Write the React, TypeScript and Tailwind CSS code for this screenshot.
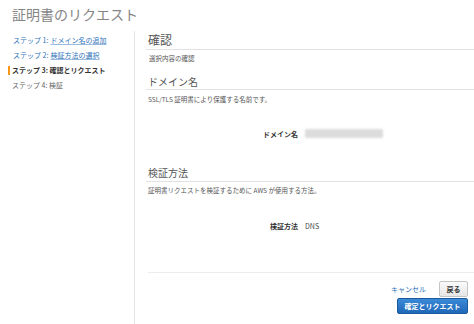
import React from 'react'

const font = { fontFamily: '"Noto Sans CJK JP", "Noto Sans", sans-serif' }

const steps = [
  { no: 1, label: 'ドメイン名の追加', state: 'done' },
  { no: 2, label: '検証方法の選択', state: 'done' },
  { no: 3, label: '確認とリクエスト', state: 'current' },
  { no: 4, label: '検証', state: 'todo' }
]

function StepItem({ no, label, state }: { no: number; label: string; state: string }) {
  if (state === 'current') {
    return (
      <div className="flex items-center h-[15px] pl-[8px]">
        <span className="w-[2px] h-[9px] bg-[#f7981d] mr-[2px]" />
        <span className="text-[7px] font-bold text-[#333]">
          ステップ {no}: {label}
        </span>
      </div>
    )
  }
  if (state === 'done') {
    return (
      <div className="flex items-center h-[15px] pl-[13px] text-[7px] text-[#2b70b8]">
        ステップ {no}: <span className="ml-[2px] underline decoration-[#9bbbe0]">{label}</span>
      </div>
    )
  }
  return (
    <div className="flex items-center h-[15px] pl-[12px] text-[7px] text-[#666]">
      ステップ {no}: {label}
    </div>
  )
}

function Row({ label, children }: { label: string; children: React.ReactNode }) {
  return (
    <div className="flex items-center text-[7px]">
      <div className="w-[152px] text-right font-bold text-[#333]">{label}</div>
      <div className="ml-[7px] text-[#444]">{children}</div>
    </div>
  )
}

export default function App() {
  return (
    <div className="w-[474px] h-[324px] bg-white overflow-hidden" style={font}>
      <h1 className="pl-[12px] pt-[2px] h-[31px] text-[14px] text-[#858585] leading-[24px]">
        証明書のリクエスト
      </h1>
      <div className="flex h-[293px]">
        <aside className="w-[135px] border-r border-[#e4e4e4] pt-[2px] shrink-0">
          <div className="flex flex-col">
            {steps.map((s) => (
              <StepItem key={s.no} {...s} />
            ))}
          </div>
        </aside>
        <main className="flex-1 pl-[11px]">
          <h2 className="pl-[2px] text-[12px] text-[#555] leading-[16px] pt-[1px]">確認</h2>
          <div className="border-b border-[#e2e2e2] mt-[1px]" />
          <p className="pl-[3px] pt-[4px] text-[6.5px] text-[#555]">選択内容の確認</p>

          <h3 className="pl-[2px] pt-[11px] text-[10px] text-[#555] leading-[14px]">ドメイン名</h3>
          <div className="border-b border-[#e2e2e2] mt-[0px]" />
          <p className="pl-[2px] pt-[5px] text-[6.5px] text-[#555]">SSL/TLS 証明書により保護する名前です。</p>

          <div className="pt-[24px]">
            <Row label="ドメイン名">
              <div className="w-[78px] h-[9px] bg-[#dcdcdc] blur-[1px] rounded-[1px]" />
            </Row>
          </div>

          <h3 className="pl-[2px] pt-[27px] text-[10px] text-[#555] leading-[14px]">検証方法</h3>
          <div className="border-b border-[#e2e2e2] mt-[1px]" />
          <p className="pl-[2px] pt-[4px] text-[6.5px] text-[#555]">
            証明書リクエストを検証するために AWS が使用する方法。
          </p>

          <div className="pt-[25px]">
            <Row label="検証方法">DNS</Row>
          </div>

          <div className="mt-[41px] ml-[2px] border-b border-[#ececec]" />

          <div className="flex flex-col items-end pr-[6px] pt-[8px]">
            <div className="flex items-center">
              <span className="text-[7px] text-[#2b70b8] mr-[13px]">キャンセル</span>
              <button className="w-[29px] h-[16px] rounded-[2px] border border-[#c4c4c4] bg-gradient-to-b from-[#fafafa] to-[#e6e6e6] text-[7px] font-bold text-[#333]">
                戻る
              </button>
            </div>
            <button className="mt-[1px] w-[71px] h-[16px] rounded-[2px] border border-[#1c5a9e] bg-gradient-to-b from-[#3a8ad8] to-[#1f67b7] text-[7px] font-bold text-white">
              確定とリクエスト
            </button>
          </div>
        </main>
      </div>
    </div>
  )
}
